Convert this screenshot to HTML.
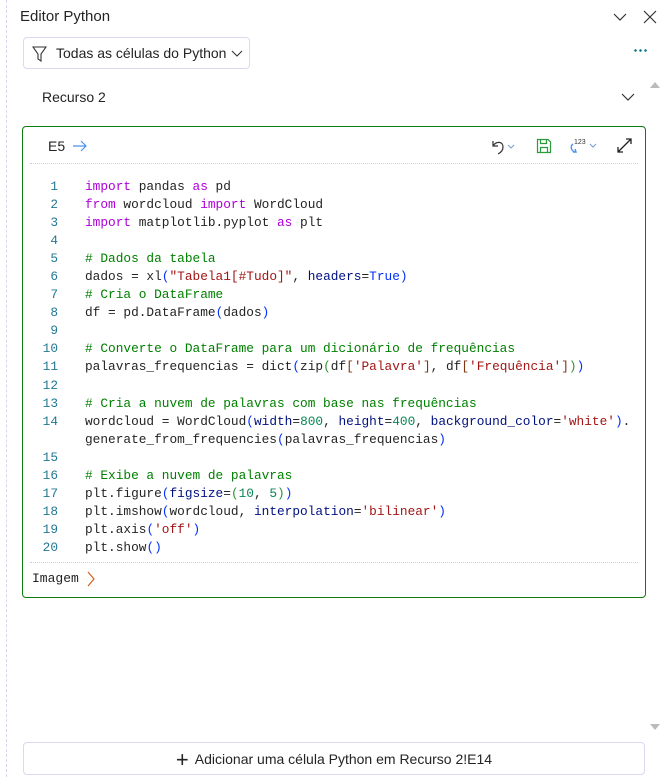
<!DOCTYPE html>
<html><head><meta charset="utf-8">
<style>
*{margin:0;padding:0;box-sizing:border-box}
html,body{width:664px;height:777px;background:#fff;overflow:hidden;position:relative;font-family:"Liberation Sans",sans-serif;color:#242424}
.abs{position:absolute}
.vline{left:6px;top:0;height:777px;border-left:1px dashed #d8d4f4}
.title{left:20px;top:8px;font-size:15px}
.filter{left:23px;top:37px;width:227px;height:32px;border:1px solid #dcd8f0;border-radius:4px;font-size:14px}
.rec{left:42px;top:89px;font-size:14px}
.card{left:22px;top:126px;width:624px;height:472px;border:1px solid #107c10;border-radius:4px}
.code{font-family:"Liberation Mono",monospace;font-size:12.8px;white-space:pre;line-height:18.05px}
.ln{left:30px;width:28px;text-align:right;color:#237893}
.k{color:#af00db}.c{color:#008000}.s{color:#a31515}.p{color:#001080}.n{color:#098658}
.b1{color:#0431fa}.b2{color:#319331}.b3{color:#7b3814}
.add{left:23px;top:742px;width:622px;height:33px;border:1px solid #dcd8f0;border-radius:4px;font-size:14px;text-align:center;line-height:33px}
</style></head><body>
<div class="abs vline"></div>
<div class="abs title">Editor Python</div>
<svg class="abs" style="left:613px;top:12px" width="14" height="10"><path d="M1 2 L7 8 L13 2" stroke="#333" fill="none" stroke-width="1.2"/></svg>
<svg class="abs" style="left:643px;top:10px" width="14" height="14"><path d="M1 1 L13 13 M13 1 L1 13" stroke="#333" fill="none" stroke-width="1.2"/></svg>
<div class="abs filter">
 <svg class="abs" style="left:8px;top:8px" width="15" height="16"><path d="M1 1 H14 L9 8 V15 L6 13 V8 Z" stroke="#333" fill="none" stroke-width="1.1"/></svg>
 <span class="abs" style="left:32px;top:7px">Todas as células do Python</span>
 <svg class="abs" style="left:207px;top:12px" width="12" height="8"><path d="M1 1 L6 6 L11 1" stroke="#333" fill="none" stroke-width="1.1"/></svg>
</div>
<div class="abs" style="left:633px;top:49px;width:14px;height:3px;background:radial-gradient(circle,#0f7b8a 1.2px,transparent 1.4px) 0 0/5px 3px repeat-x"></div>
<svg class="abs" style="left:650px;top:82px" width="10" height="6"><path d="M0 6 L5 0 L10 6Z" fill="#bbb"/></svg>
<div class="abs rec">Recurso 2</div>
<svg class="abs" style="left:621px;top:93px" width="14" height="9"><path d="M1 1 L7 7 L13 1" stroke="#333" fill="none" stroke-width="1.2"/></svg>

<div class="abs card"></div>
<div class="abs" style="left:48px;top:138px;font-size:14px">E5</div>
<svg class="abs" style="left:72px;top:139px" width="16" height="14"><path d="M1 7 H14 M9 2 L14 7 L9 12" stroke="#4f8ff0" fill="none" stroke-width="1.2"/></svg>
<svg class="abs" style="left:490px;top:138px" width="28" height="18"><path d="M3 3 V8 H8 M3 8 C6 3 13 3 13 9 C13 13 10 15 8 16" stroke="#333" fill="none" stroke-width="1.2"/><path d="M18 7 L21 10 L24 7" stroke="#7aa0d0" fill="none"/></svg>
<svg class="abs" style="left:536px;top:138px" width="16" height="16"><path d="M1.5 1.5 H12 L14.5 4 V14.5 H1.5 Z M4.5 1.5 V5.5 H10.5 V1.5 M4.5 14.5 V9.5 H11.5 V14.5" stroke="#2a9a3a" fill="none" stroke-width="1.2"/></svg>
<svg class="abs" style="left:568px;top:136px" width="34" height="20"><path d="M5 8 C2 10 3 15 7 16 M5 16 L8 16 L7 13" stroke="#4f8ff0" fill="none" stroke-width="1.4"/><text x="6" y="8" font-size="7" font-family="Liberation Sans" fill="#333">123</text><path d="M22 8 L25 11 L28 8" stroke="#7aa0d0" fill="none"/></svg>
<svg class="abs" style="left:616px;top:137px" width="17" height="17"><path d="M2 15 L15 2 M2 10 V15 H7 M10 2 H15 V7" stroke="#222" fill="none" stroke-width="1.3"/></svg>
<div class="abs" style="left:30px;top:163px;width:608px;border-top:1px dotted #d0cde8"></div>

<div class="abs code ln" style="top:178px">1
2
3
4
5
6
7
8
9
10
11
12
13
14

15
16
17
18
19
20</div>
<div class="abs code" style="left:85px;top:178px"><span class="k">import</span> pandas <span class="k">as</span> pd
<span class="k">from</span> wordcloud <span class="k">import</span> WordCloud
<span class="k">import</span> matplotlib.pyplot <span class="k">as</span> plt

<span class="c"># Dados da tabela</span>
dados = xl<span class="b1">(</span><span class="s">"Tabela1[#Tudo]"</span>, <span class="p">headers</span>=<span class="b1">True</span><span class="b1">)</span>
<span class="c"># Cria o DataFrame</span>
df = pd.DataFrame<span class="b1">(</span>dados<span class="b1">)</span>

<span class="c"># Converte o DataFrame para um dicionário de frequências</span>
palavras_frequencias = dict<span class="b1">(</span>zip<span class="b2">(</span>df<span class="b3">[</span><span class="s">'Palavra'</span><span class="b3">]</span>, df<span class="b3">[</span><span class="s">'Frequência'</span><span class="b3">]</span><span class="b2">)</span><span class="b1">)</span>

<span class="c"># Cria a nuvem de palavras com base nas frequências</span>
wordcloud = WordCloud<span class="b1">(</span><span class="p">width</span>=<span class="n">800</span>, <span class="p">height</span>=<span class="n">400</span>, <span class="p">background_color</span>=<span class="s">'white'</span><span class="b1">)</span>.
generate_from_frequencies<span class="b1">(</span>palavras_frequencias<span class="b1">)</span>

<span class="c"># Exibe a nuvem de palavras</span>
plt.figure<span class="b1">(</span><span class="p">figsize</span>=<span class="b2">(</span><span class="n">10</span>, <span class="n">5</span><span class="b2">)</span><span class="b1">)</span>
plt.imshow<span class="b1">(</span>wordcloud, <span class="p">interpolation</span>=<span class="s">'bilinear'</span><span class="b1">)</span>
plt.axis<span class="b1">(</span><span class="s">'off'</span><span class="b1">)</span>
plt.show<span class="b1">()</span></div>
<div class="abs" style="left:30px;top:562px;width:608px;border-top:1px dotted #d0cde8"></div>
<div class="abs code" style="left:32px;top:570px;font-size:13px;color:#222">Imagem</div>
<svg class="abs" style="left:86px;top:571px" width="10" height="16"><path d="M2 1 L8 8 L2 15" stroke="#d06020" fill="none" stroke-width="1.2"/></svg>

<svg class="abs" style="left:650px;top:724px" width="10" height="6"><path d="M0 0 L5 6 L10 0Z" fill="#bbb"/></svg>
<div class="abs add"><span style="font-size:22px;font-weight:300;vertical-align:-3px;margin-right:6px">+</span>Adicionar uma célula Python em Recurso 2!E14</div>
</body></html>
